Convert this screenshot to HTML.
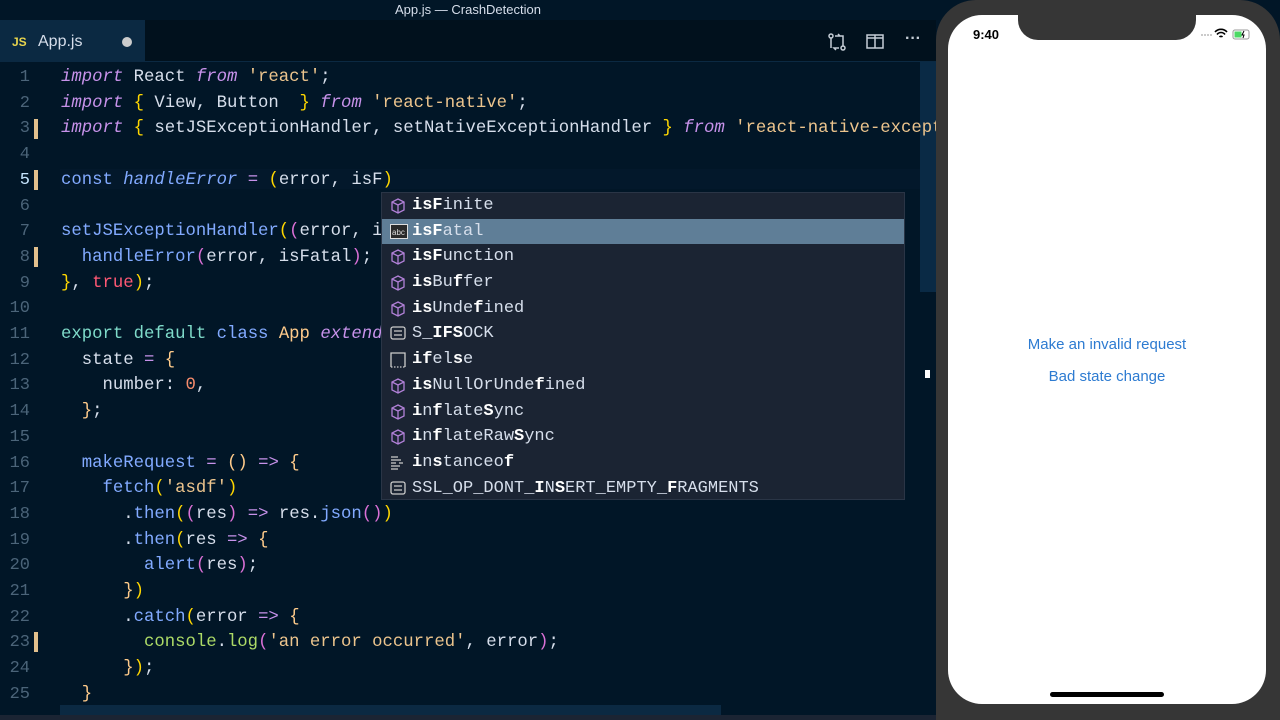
<!DOCTYPE html>
<html><head><meta charset="utf-8"><style>
*{margin:0;padding:0;box-sizing:border-box}
body{width:1280px;height:720px;overflow:hidden;background:#011627;position:relative;font-family:"Liberation Mono",monospace}
.title{position:absolute;left:0;top:0;width:936px;height:20px;text-align:center;color:#d6deeb;font:13px "Liberation Sans",sans-serif;line-height:20px}
.tabbar{position:absolute;left:0;top:20px;width:936px;height:42px;background:#01111d;border-bottom:1px solid #0b2942}
.tab{position:absolute;left:0;top:0;width:145px;height:42px;background:#0b2942;color:#d6deeb;font:16px "Liberation Sans",sans-serif;line-height:44px}
.tab b{color:#e8d44d;font-size:12px;position:absolute;left:12px}
.tab span{position:absolute;left:38px}
.tab i{position:absolute;left:122px;top:17px;width:10px;height:10px;border-radius:50%;background:#ccc}
.code{position:absolute;left:0;top:64px;width:920px;font-size:17.3px}
.ln{position:absolute;left:0;width:30px;text-align:right;color:#4b6479;font-size:17px}
.l{position:absolute;left:61px;white-space:pre;color:#d6deeb}
.mk{position:absolute;left:34px;width:4px;height:20px;background:#e2c08d}
.k{color:#c792ea;font-style:italic}.s{color:#ecc48d}.f{color:#82aaff}.p{color:#c792ea}.b{color:#ffd700}.r{color:#da70d6}.t{color:#ff5874}.n{color:#f78c6c}.e{color:#7fdbca}.g{color:#addb67}.c{color:#ffcb8b}.fi{color:#82aaff;font-style:italic}.o{color:#c792ea}
.pop{position:absolute;left:381px;top:192px;width:524px;height:308px;background:#1b2433;border:1px solid #2a3546}
.it{height:25.7px;line-height:25.7px;color:#d6deeb;font-size:17px;position:relative;padding-left:30px;white-space:pre}
.it.sel{background:#5f7e97}
.it em{font-style:normal;font-weight:bold;color:#fff}
.it svg{position:absolute;left:8px;top:5px}
.phone{position:absolute;left:936px;top:0;width:344px;height:720px;background:#363636;border-radius:40px 40px 0 0}
.scr{position:absolute;left:948px;top:15px;width:318px;height:689px;background:#fff;border-radius:34px;overflow:hidden}
.notch{position:absolute;left:1018px;top:0;width:178px;height:40px;background:#363636;border-radius:0 0 20px 20px}
.btn{position:absolute;width:318px;text-align:center;color:#2d7bd1;font:15px "Liberation Sans",sans-serif}
</style></head><body>
<div class="title">App.js — CrashDetection</div>
<div class="tabbar"><div class="tab"><b>JS</b><span>App.js</span><i></i></div>
<svg style="position:absolute;left:827px;top:13px" width="20" height="18" viewBox="0 0 20 18" fill="none" stroke="#c5cdd6" stroke-width="1.5"><circle cx="4" cy="3" r="2"/><circle cx="16" cy="15" r="2"/><path d="M4 5v10M8 3h5l-2-2M16 13V3h-5M12 15H7l2 2"/></svg>
<svg style="position:absolute;left:866px;top:14px" width="18" height="15" fill="none" stroke="#c5cdd6" stroke-width="1.5"><rect x="1" y="1" width="16" height="13"/><path d="M9 1v13M1 4h16"/></svg>
<div style="position:absolute;left:905px;top:10px;color:#c5cdd6;font:bold 16px 'Liberation Sans'">···</div>
</div>
<div style="position:absolute;left:60px;top:169px;width:860px;height:20px;background:#03182b"></div>
<div style="position:absolute;left:60px;top:705px;width:661px;height:10px;background:#0b2942"></div>
<div style="position:absolute;left:920px;top:62px;width:16px;height:230px;background:#0a2a45"></div>
<div style="position:absolute;left:0;top:715px;width:936px;height:5px;background:#1b2433"></div>
<div class="code">
<div class="mk" style="top:55px"></div><div class="mk" style="top:106px"></div><div class="mk" style="top:183px"></div><div class="mk" style="top:568px"></div>
<div class="ln" style="top:4px">1</div><div class="l" style="top:4px"><span class="k">import</span> React <span class="k">from</span> <span class="s">'react'</span>;</div>
<div class="ln" style="top:29.7px">2</div><div class="l" style="top:29.7px"><span class="k">import</span> <span class="b">{</span> View, Button  <span class="b">}</span> <span class="k">from</span> <span class="s">'react-native'</span>;</div>
<div class="ln" style="top:55.4px">3</div><div class="l" style="top:55.4px"><span class="k">import</span> <span class="b">{</span> setJSExceptionHandler, setNativeExceptionHandler <span class="b">}</span> <span class="k">from</span> <span class="s">'react-native-except</span></div>
<div class="ln" style="top:81.1px">4</div>
<div class="ln" style="top:106.8px;color:#c5e4fd">5</div><div class="l" style="top:106.8px"><span class="f">const</span> <span class="fi">handleError</span> <span class="o">=</span> <span class="b">(</span>error, isF<span class="b">)</span></div>
<div class="ln" style="top:132.5px">6</div>
<div class="ln" style="top:158.2px">7</div><div class="l" style="top:158.2px"><span class="f">setJSExceptionHandler</span><span class="b">(</span><span class="r">(</span>error, i</div>
<div class="ln" style="top:183.9px">8</div><div class="l" style="top:183.9px">  <span class="f">handleError</span><span class="r">(</span>error, isFatal<span class="r">)</span>;</div>
<div class="ln" style="top:209.6px">9</div><div class="l" style="top:209.6px"><span class="b">}</span>, <span class="t">true</span><span class="b">)</span>;</div>
<div class="ln" style="top:235.3px">10</div>
<div class="ln" style="top:261px">11</div><div class="l" style="top:261px"><span class="e">export</span> <span class="e">default</span> <span class="f">class</span> <span class="c">App</span> <span class="k">extend</span></div>
<div class="ln" style="top:286.7px">12</div><div class="l" style="top:286.7px">  state <span class="o">=</span> <span class="c">{</span></div>
<div class="ln" style="top:312.4px">13</div><div class="l" style="top:312.4px">    number: <span class="n">0</span>,</div>
<div class="ln" style="top:338.1px">14</div><div class="l" style="top:338.1px">  <span class="c">}</span>;</div>
<div class="ln" style="top:363.8px">15</div>
<div class="ln" style="top:389.5px">16</div><div class="l" style="top:389.5px">  <span class="f">makeRequest</span> <span class="o">=</span> <span class="c">()</span> <span class="o">=&gt;</span> <span class="c">{</span></div>
<div class="ln" style="top:415.2px">17</div><div class="l" style="top:415.2px">    <span class="f">fetch</span><span class="b">(</span><span class="s">'asdf'</span><span class="b">)</span></div>
<div class="ln" style="top:440.9px">18</div><div class="l" style="top:440.9px">      .<span class="f">then</span><span class="b">(</span><span class="r">(</span>res<span class="r">)</span> <span class="o">=&gt;</span> res.<span class="f">json</span><span class="r">()</span><span class="b">)</span></div>
<div class="ln" style="top:466.6px">19</div><div class="l" style="top:466.6px">      .<span class="f">then</span><span class="b">(</span>res <span class="o">=&gt;</span> <span class="c">{</span></div>
<div class="ln" style="top:492.3px">20</div><div class="l" style="top:492.3px">        <span class="f">alert</span><span class="r">(</span>res<span class="r">)</span>;</div>
<div class="ln" style="top:518px">21</div><div class="l" style="top:518px">      <span class="c">}</span><span class="b">)</span></div>
<div class="ln" style="top:543.7px">22</div><div class="l" style="top:543.7px">      .<span class="f">catch</span><span class="b">(</span>error <span class="o">=&gt;</span> <span class="c">{</span></div>
<div class="ln" style="top:569.4px">23</div><div class="l" style="top:569.4px">        <span class="g">console</span>.<span class="g">log</span><span class="r">(</span><span class="s">'an error occurred'</span>, error<span class="r">)</span>;</div>
<div class="ln" style="top:595.1px">24</div><div class="l" style="top:595.1px">      <span class="c">}</span><span class="b">)</span>;</div>
<div class="ln" style="top:620.8px">25</div><div class="l" style="top:620.8px">  <span class="c">}</span></div>
</div>
<div class="pop">
<div class="it"><svg width="16" height="16" viewBox="0 0 16 16" fill="none" stroke="#b180d7" stroke-width="1.3"><path d="M8 1l6 3v8l-6 3-6-3V4zM2 4l6 3 6-3M8 7v8"/></svg><em>isF</em>inite</div>
<div class="it sel"><svg width="18" height="15" viewBox="0 0 18 15"><rect x="0.5" y="0.5" width="17" height="14" fill="#2a2a2a" stroke="#ddd"/><text x="2" y="11" font-size="8" fill="#ddd" font-family="Liberation Sans">abc</text></svg><em>isF</em>atal</div>
<div class="it"><svg width="16" height="16" viewBox="0 0 16 16" fill="none" stroke="#b180d7" stroke-width="1.3"><path d="M8 1l6 3v8l-6 3-6-3V4zM2 4l6 3 6-3M8 7v8"/></svg><em>isF</em>unction</div>
<div class="it"><svg width="16" height="16" viewBox="0 0 16 16" fill="none" stroke="#b180d7" stroke-width="1.3"><path d="M8 1l6 3v8l-6 3-6-3V4zM2 4l6 3 6-3M8 7v8"/></svg><em>is</em>Bu<em>f</em>fer</div>
<div class="it"><svg width="16" height="16" viewBox="0 0 16 16" fill="none" stroke="#b180d7" stroke-width="1.3"><path d="M8 1l6 3v8l-6 3-6-3V4zM2 4l6 3 6-3M8 7v8"/></svg><em>is</em>Unde<em>f</em>ined</div>
<div class="it"><svg width="16" height="14" viewBox="0 0 16 14" fill="none" stroke="#ccc" stroke-width="1.3"><rect x="1" y="1" width="14" height="12" rx="2"/><path d="M4 5h8M4 9h8"/></svg>S_<em>IFS</em>OCK</div>
<div class="it"><svg width="16" height="16" viewBox="0 0 16 16" fill="none" stroke="#ccc" stroke-width="1.3"><path d="M1 15V1h14v14"/><path d="M1 15h14" stroke-dasharray="1.5 1.5"/></svg><em>if</em>el<em>s</em>e</div>
<div class="it"><svg width="16" height="16" viewBox="0 0 16 16" fill="none" stroke="#b180d7" stroke-width="1.3"><path d="M8 1l6 3v8l-6 3-6-3V4zM2 4l6 3 6-3M8 7v8"/></svg><em>is</em>NullOrUnde<em>f</em>ined</div>
<div class="it"><svg width="16" height="16" viewBox="0 0 16 16" fill="none" stroke="#b180d7" stroke-width="1.3"><path d="M8 1l6 3v8l-6 3-6-3V4zM2 4l6 3 6-3M8 7v8"/></svg><em>i</em>n<em>f</em>late<em>S</em>ync</div>
<div class="it"><svg width="16" height="16" viewBox="0 0 16 16" fill="none" stroke="#b180d7" stroke-width="1.3"><path d="M8 1l6 3v8l-6 3-6-3V4zM2 4l6 3 6-3M8 7v8"/></svg><em>i</em>n<em>f</em>lateRaw<em>S</em>ync</div>
<div class="it"><svg width="16" height="16" viewBox="0 0 16 16" fill="none" stroke="#ccc" stroke-width="1.3"><path d="M1 2h7M1 5h10M1 8h5M9 8h4M1 11h9M1 14h7"/></svg><em>i</em>n<em>s</em>tanceo<em>f</em></div>
<div class="it"><svg width="16" height="14" viewBox="0 0 16 14" fill="none" stroke="#ccc" stroke-width="1.3"><rect x="1" y="1" width="14" height="12" rx="2"/><path d="M4 5h8M4 9h8"/></svg>SSL_OP_DONT_<em>I</em>N<em>S</em>ERT_EMPTY_<em>F</em>RAGMENTS</div>
</div>
<div style="position:absolute;left:925px;top:370px;width:5px;height:8px;background:#fff"></div>
<div class="phone"></div>
<div class="scr"></div>
<div class="notch"></div>
<div style="position:absolute;left:973px;top:27px;font:bold 13px 'Liberation Sans';color:#000">9:40</div>
<svg style="position:absolute;left:1200px;top:28px" width="56" height="12" viewBox="0 0 56 12"><g fill="#bbb"><circle cx="2" cy="7" r="1"/><circle cx="5" cy="7" r="1"/><circle cx="8" cy="7" r="1"/><circle cx="11" cy="7" r="1"/></g><path d="M15 4a8 8 0 0 1 12 0M17 6.5a5 5 0 0 1 8 0M19.5 9a2 2 0 0 1 3 0" stroke="#000" stroke-width="1.6" fill="none"/><rect x="33" y="2" width="16" height="9" rx="2" fill="none" stroke="#999"/><rect x="34.5" y="3.5" width="7" height="6" fill="#4cd964"/><path d="M44 3l-2 4h2l-1 3" stroke="#000" fill="none"/></svg>
<div class="btn" style="left:948px;top:336px">Make an invalid request</div>
<div class="btn" style="left:948px;top:368px">Bad state change</div>
<div style="position:absolute;left:1050px;top:692px;width:114px;height:5px;border-radius:3px;background:#000"></div>
</body></html>
